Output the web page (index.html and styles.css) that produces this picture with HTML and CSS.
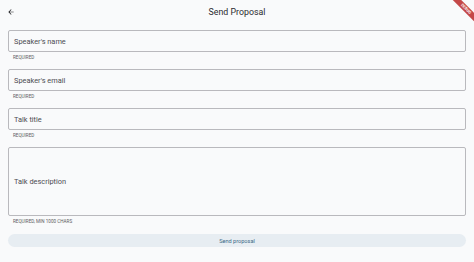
FILE: index.html
```html
<!DOCTYPE html>
<html>
<head>
	<title>Send Proposal</title>
	<meta charset="UTF-8">
	<meta name="viewport" content="width=device-width, initial-scale=1.0">
	<link rel="stylesheet" href="styles.css">
</head>
<body>
	<header class="app-bar">
		<button class="back" type="button" aria-label="Back">
			<svg width="8" height="8" viewBox="0 0 24 24"><path d="M20 11H7.83l5.59-5.59L12 4l-8 8 8 8 1.41-1.41L7.83 13H20v-2z" fill="#1c1c1f"/></svg>
		</button>
		<h1 class="title">Send Proposal</h1>
		<span></span>
	</header>

	<form class="proposal-form">
		<div class="group">
			<div class="field">Speaker's name</div>
			<div class="helper">REQUIRED</div>
		</div>
		<div class="group">
			<div class="field">Speaker's email</div>
			<div class="helper">REQUIRED</div>
		</div>
		<div class="group">
			<div class="field">Talk title</div>
			<div class="helper">REQUIRED</div>
		</div>
		<div class="group">
			<div class="field field-tall">Talk description</div>
			<div class="helper">REQUIRED, MIN 1000 CHARS</div>
		</div>
		<button class="submit" type="submit">Send proposal</button>
	</form>

	<div class="debug-banner">DEBUG</div>
</body>
</html>
```

FILE: styles.css
```css
html, body {
	margin: 0;
	height: 100%;
}

body {
	background-color: #f9fafb;
	font-family: Roboto, "Liberation Sans", sans-serif;
	color: #1c1c1f;
	overflow: hidden;
	position: relative;
}

.app-bar {
	display: grid;
	grid-template-columns: 1fr auto 1fr;
	align-items: center;
	height: 23px;
	padding: 0 7px;
}

.back {
	display: flex;
	align-items: center;
	padding: 0;
	border: none;
	background: none;
	width: 10px;
	height: 10px;
}

.title {
	margin: 0;
	font-size: 8.8px;
	font-weight: 400;
	color: #2a2a2e;
}

.proposal-form {
	display: flex;
	flex-direction: column;
	gap: 8px;
	padding: 7px 8px 0;
}

.group {
	display: flex;
	flex-direction: column;
}

.field {
	display: flex;
	align-items: center;
	height: 22px;
	box-sizing: border-box;
	padding: 0 5px;
	border: 1px solid #b9b9bd;
	border-radius: 2px;
	font-size: 7.4px;
	color: #4c4c52;
}

.field-tall {
	height: 69px;
}

.helper {
	margin-top: 3px;
	padding-left: 5px;
	line-height: 6px;
	font-size: 4.6px;
	color: #5c5c62;
}

.submit {
	margin-top: 1px;
	height: 13px;
	padding: 0;
	border: none;
	border-radius: 7px;
	background-color: #e7edf2;
	color: #3b6a88;
	font-family: inherit;
	font-size: 5.6px;
}

.debug-banner {
	position: absolute;
	top: 6px;
	right: -12px;
	width: 40px;
	height: 6px;
	line-height: 6px;
	transform: rotate(45deg);
	background-color: rgba(183, 28, 28, 0.8);
	color: #fff;
	font-size: 4px;
	font-weight: 700;
	text-align: center;
}
```
